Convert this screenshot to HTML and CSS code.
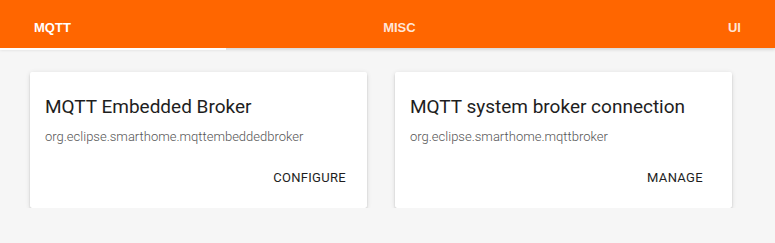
FILE: index.html
```html
<!DOCTYPE html>
<html>
<head>
<meta charset="utf-8">
<link rel="stylesheet" href="styles.css">
</head>
<body>
<header class="tabbar">
  <div class="tab active">MQTT</div>
  <div class="tab">MISC</div>
  <div class="tab">UI</div>
  <div class="indicator"></div>
</header>
<main class="cards">
  <section class="card">
    <h2 class="card-title">MQTT Embedded Broker</h2>
    <div class="card-sub">org.eclipse.smarthome.mqttembeddedbroker</div>
    <div class="card-actions"><button class="btn">CONFIGURE</button></div>
  </section>
  <section class="card">
    <h2 class="card-title">MQTT system broker connection</h2>
    <div class="card-sub">org.eclipse.smarthome.mqttbroker</div>
    <div class="card-actions"><button class="btn">MANAGE</button></div>
  </section>
</main>
</body>
</html>
```
FILE: styles.css
```css
html, body {
  margin: 0;
  padding: 0;
  background: #f6f6f6;
  font-family: Roboto, "Liberation Sans", sans-serif;
}
.tabbar {
  position: relative;
  height: 48px;
  background: #ff6600;
  display: flex;
  justify-content: space-between;
  padding: 0 34px;
  box-shadow: 0 2px 3px rgba(0,0,0,0.12);
}
.tab {
  font-family: "Liberation Sans", Arial, sans-serif;
  font-weight: bold;
  font-size: 13px;
  line-height: 15px;
  padding-top: 20px;
  color: rgba(255,255,255,0.85);
}
.tab.active {
  color: #fff;
}
.indicator {
  position: absolute;
  left: 0;
  top: 48px;
  width: 226px;
  height: 2px;
  background: #fff;
}
.cards {
  display: flex;
  gap: 28px;
  padding: 24px 30px 0;
}
.card {
  width: 337px;
  box-sizing: border-box;
  background: #fff;
  border-radius: 2px;
  padding: 23px 13px 12px 15px;
  box-shadow: 0 2px 2px rgba(0,0,0,0.14), 0 1px 5px rgba(0,0,0,0.12), 0 3px 1px -2px rgba(0,0,0,0.2);
}
.card-title {
  margin: 0;
  font-size: 19px;
  line-height: 24px;
  font-weight: 400;
  color: #1e1e1e;
}
.card-sub {
  margin-top: 8px;
  font-size: 13px;
  line-height: 20px;
  font-weight: 300;
  color: #555;
}
.card-actions {
  display: flex;
  justify-content: flex-end;
  margin-top: 13px;
}
.btn {
  border: 0;
  background: transparent;
  font-family: Roboto, sans-serif;
  font-weight: 400;
  font-size: 13px;
  line-height: 36px;
  height: 36px;
  min-width: 88px;
  padding: 0 8px;
  color: #1e1e1e;
  letter-spacing: 0.3px;
  text-align: center;
}
```
